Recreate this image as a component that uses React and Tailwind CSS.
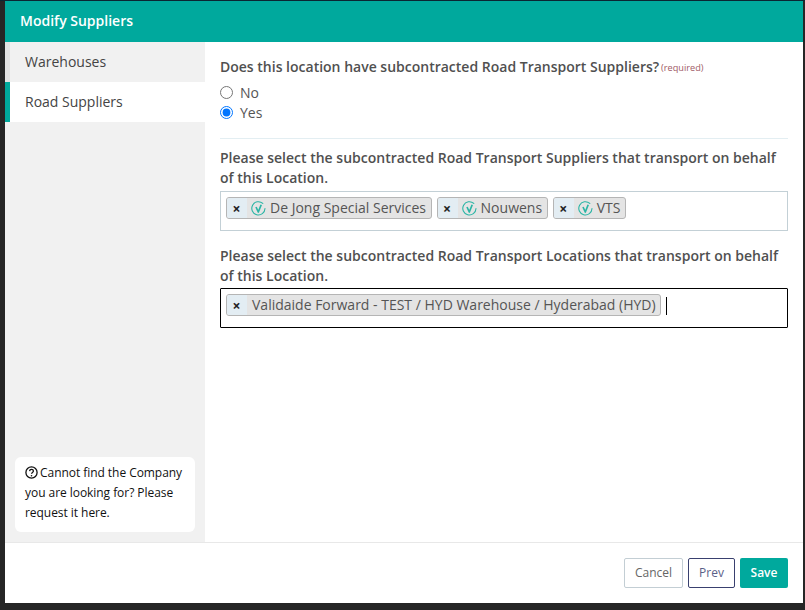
import React from 'react'

const VIcon = () => (
    <svg width="15" height="15" viewBox="0 0 15 15" fill="none" className="shrink-0">
        <path d="M11.8 2.4A6.6 6.6 0 1 0 14 7.5" stroke="#2ab5a5" strokeWidth="1.1" strokeLinecap="round"/>
        <path d="M5 6 7.3 11 10.2 3.8" stroke="#2ab5a5" strokeWidth="1.7" strokeLinejoin="round"/>
    </svg>
)

const Tag = ({text, verified}) => (
    <div className="flex h-[22px] items-center rounded-[3px] border border-[#b5b5b5] bg-[#e4e4e4] overflow-hidden">
        <span className="flex h-full w-[20px] shrink-0 items-center justify-center pr-px bg-[#e3edf3] text-[#222] text-[14px] font-bold">×</span>
        <span className={`flex items-center gap-[4px] pr-[4.6px] pb-[2px] text-[#555] whitespace-nowrap ${verified ? 'pl-[4px]' : 'pl-[5px]'}`}>
            {verified && <span className="mt-[2px] flex"><VIcon/></span>}
            {text}
        </span>
    </div>
)

const App = () => {
    return (
        <div className="w-[805px] h-[610px] bg-[#262626] border-t border-[#0b2633] pl-[5px] overflow-hidden text-[14px] text-[#555]" style={{fontFamily: '"Open Sans", sans-serif'}}>
            <div className="w-[798px] h-[602px] bg-white flex flex-col">
                <div className="h-[41px] shrink-0 flex items-center bg-[#00a99d] px-[15px] pb-[2px] text-white font-semibold text-[14px]">
                    Modify Suppliers
                </div>
                <div className="flex flex-1 min-h-0">
                    <div className="w-[200px] shrink-0 bg-[#f1f1f1] flex flex-col">
                        <div className="h-[40px] flex items-center border-l-[5px] border-[#e3e3e3] pl-[15px] pb-[2px] text-[#444]">Warehouses</div>
                        <div className="h-[40px] flex items-center border-l-[5px] border-[#00a99d] bg-white pl-[15px] pb-[2px] text-[#444]">Road Suppliers</div>
                        <div className="mt-auto mb-[10px] mx-[10px] rounded-[6px] bg-white px-[10px] pt-[6px] pb-[9px] text-[12px] leading-[20px] tracking-[-0.05px] text-[#111]">
                            <svg width="13" height="13" viewBox="0 0 13 13" fill="none" className="inline-block align-[-2px] mr-[2px]">
                                <circle cx="6.5" cy="6.5" r="5.6" stroke="#111" strokeWidth="1.3"/>
                                <path d="M4.6 5.1C4.7 2.8 8.4 2.9 8.4 5c0 1.4-1.9 1.4-1.9 2.8" stroke="#111" strokeWidth="1.3"/>
                                <circle cx="6.5" cy="9.8" r=".8" fill="#111"/>
                            </svg>
                            Cannot find the Company you are looking for? Please request it here.
                        </div>
                    </div>
                    <div className="flex-1 pl-[15px] pr-[15px] pt-[14px]">
                        <div className="h-[20px] flex items-center font-semibold text-[#505050] whitespace-nowrap">
                            Does this location have subcontracted Road Transport Suppliers?
                            <span className="ml-[2px] mt-[3px] text-[9.2px] font-normal text-[#a05a66]">(required)</span>
                        </div>
                        <label className="h-[20px] flex items-center gap-[7px] mt-[6px]">
                            <input type="radio" name="sub" className="m-0 w-[13px] h-[13px]"/>No
                        </label>
                        <label className="h-[20px] flex items-center gap-[7px]">
                            <input type="radio" name="sub" defaultChecked className="m-0 w-[13px] h-[13px]"/>Yes
                        </label>
                        <div className="mt-[16px] border-t border-[#e3eef2]"></div>
                        <div className="mt-[9px] font-semibold leading-[20px] text-[#505050]">
                            Please select the subcontracted Road Transport Suppliers that transport on behalf of this Location.
                        </div>
                        <div className="mt-[3px] h-[40px] border border-[#c3d0d6] px-[5px] pt-[5px] flex gap-[5px]">
                            <Tag text="De Jong Special Services" verified/>
                            <Tag text="Nouwens" verified/>
                            <Tag text="VTS" verified/>
                        </div>
                        <div className="mt-[15px] font-semibold leading-[20px] text-[#505050]">
                            Please select the subcontracted Road Transport Locations that transport on behalf of this Location.
                        </div>
                        <div className="mt-[2px] h-[40px] border border-black rounded-[1px] px-[5px] pt-[5px] flex gap-[5px]">
                            <Tag text="Validaide Forward - TEST / HYD Warehouse / Hyderabad (HYD)"/>
                            <span className="mt-[3px] w-px h-[18px] bg-black"></span>
                        </div>
                    </div>
                </div>
                <div className="h-[61px] shrink-0 border-t border-[#e8e8e8] flex items-start justify-end gap-[5px] pt-[15px] pr-[15px] text-[12px]">
                    <button className="h-[30px] w-[59px] rounded-[2px] border border-[#c3ced4] text-[#666]">Cancel</button>
                    <button className="h-[30px] w-[47px] rounded-[2px] border border-[#39406f] text-[#5a6088]">Prev</button>
                    <button className="h-[30px] w-[48px] rounded-[2px] bg-[#00a99d] text-white font-semibold">Save</button>
                </div>
            </div>
        </div>
    )
}

export default App
